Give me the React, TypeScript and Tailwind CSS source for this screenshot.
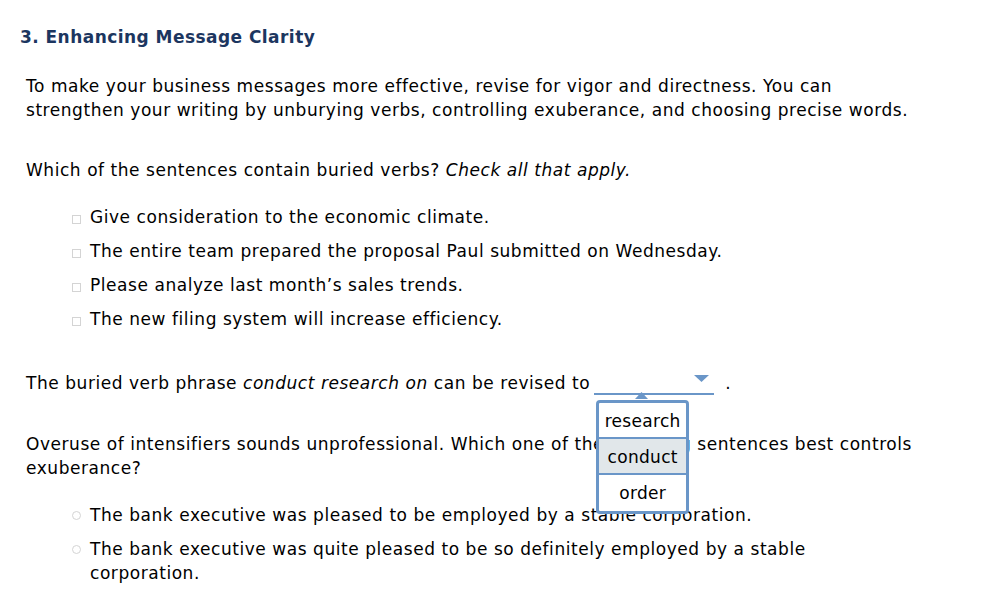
import React from "react";

const checks = [
  "Give consideration to the economic climate.",
  "The entire team prepared the proposal Paul submitted on Wednesday.",
  "Please analyze last month’s sales trends.",
  "The new filing system will increase efficiency.",
];

const options = ["research", "conduct", "order"];

export default function App() {
  return (
    <main
      className="min-h-screen bg-white text-[17px] leading-[24px] tracking-[0.55px] text-black"
      style={{ fontFamily: '"DejaVu Sans", Verdana, sans-serif' }}
    >
      <div className="px-[20px] pt-[25px]">
        <h1 className="text-[17px] font-bold leading-[24px] tracking-[0.45px] text-[#1c3660]">
          3. Enhancing Message Clarity
        </h1>
      </div>

      <div className="px-[26px] pt-[25px]">
        <p>
          To make your business messages more effective, revise for vigor and directness. You can
          <br />
          strengthen your writing by unburying verbs, controlling exuberance, and choosing precise words.
        </p>

        <p className="mt-[36px]">
          Which of the sentences contain buried verbs? <em>Check all that apply.</em>
        </p>

        <ul className="mt-[23px] flex flex-col gap-[10px] pl-[46px]">
          {checks.map((c) => (
            <li key={c} className="flex items-center">
              <span className="mr-[9px] mt-[4px] h-[9px] w-[9px] border border-[#d4d4d4] bg-white" />
              <span>{c}</span>
            </li>
          ))}
        </ul>

        <div className="mt-[40px] flex items-start">
          <span>
            The buried verb phrase <em>conduct research on</em> can be revised to
          </span>
          <div className="relative ml-[4px] h-[24px] w-[120px] border-b-2 border-[#6a96c8]">
            <svg className="absolute right-[5px] top-[4px]" width="15" height="7" viewBox="0 0 15 7">
              <path d="M0 0H15L7.5 7Z" fill="#6a96c8" />
            </svg>
            <svg className="absolute left-[41px] top-[21px] z-20" width="13" height="7" viewBox="0 0 13 7">
              <path d="M0 7H13L6.5 0Z" fill="#6a96c8" />
            </svg>
            <div className="absolute left-[2px] top-[29px] z-10 w-[93px] overflow-hidden rounded-[4px] border-[3px] border-[#6a96c8] bg-white tracking-[0.3px]">
              {options.map((o, i) => (
                <div
                  key={o}
                  className={
                    "h-[36px] text-center leading-[36px] " +
                    (i === 1 ? "bg-[#e1e7ea] " : "") +
                    (i < 2 ? "border-b-2 border-[#6a96c8]" : "")
                  }
                >
                  {o}
                </div>
              ))}
            </div>
          </div>
          <span className="ml-[11px]">.</span>
        </div>

        <p className="mt-[37px]">
          Overuse of intensifiers sounds unprofessional. Which one of the following sentences best controls
          <br />
          exuberance?
        </p>

        <ul className="mt-[23px] flex flex-col gap-[10px] pl-[46px]">
          <li className="flex items-start">
            <span className="mr-[9px] mt-[8px] h-[9px] w-[9px] rounded-full border border-[#d4d4d4] bg-white" />
            <span>The bank executive was pleased to be employed by a stable corporation.</span>
          </li>
          <li className="flex items-start">
            <span className="mr-[9px] mt-[8px] h-[9px] w-[9px] rounded-full border border-[#d4d4d4] bg-white" />
            <span>
              The bank executive was quite pleased to be so definitely employed by a stable
              <br />
              corporation.
            </span>
          </li>
        </ul>
      </div>
    </main>
  );
}
